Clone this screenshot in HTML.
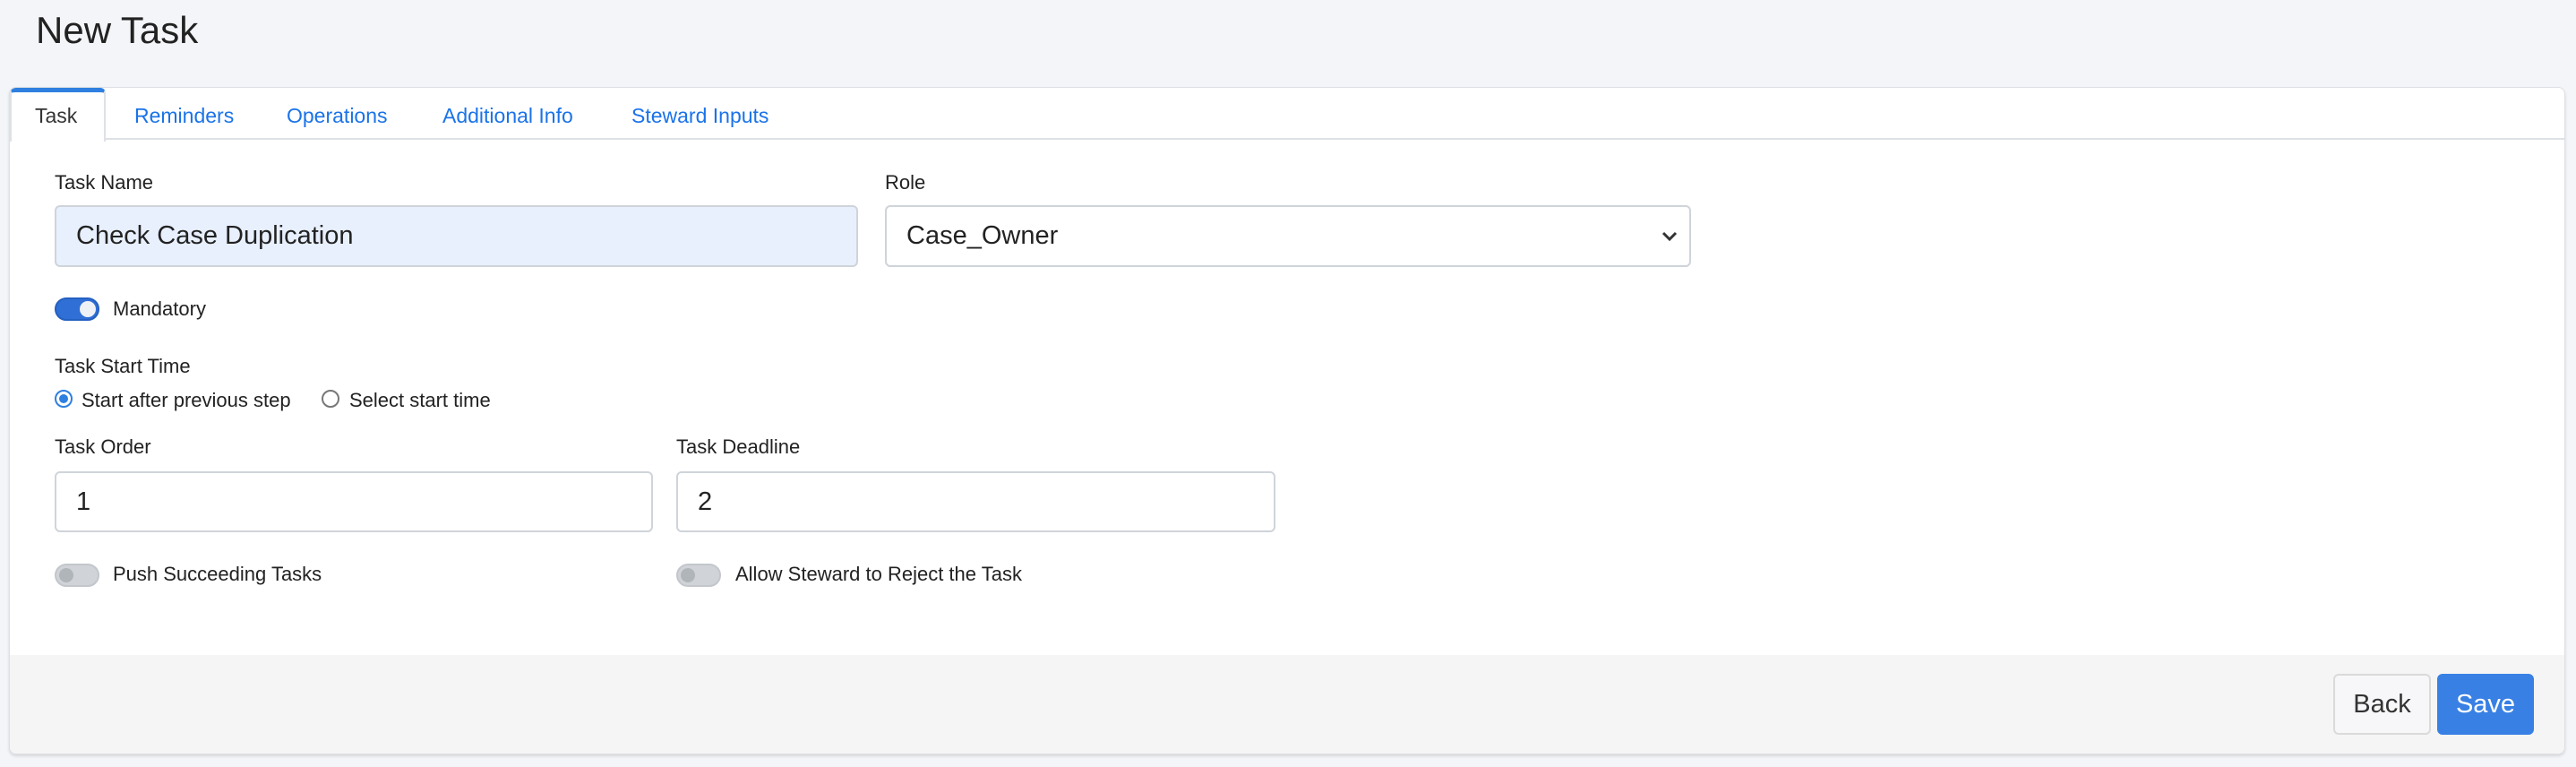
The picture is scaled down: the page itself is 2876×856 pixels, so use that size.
<!DOCTYPE html>
<html><head><meta charset="utf-8"><style>
*{box-sizing:border-box;margin:0;padding:0}
body{width:2876px;height:856px;background:#f4f5f9;font-family:"Liberation Sans",Arial,sans-serif;color:#212529;position:relative;overflow:hidden}
.a{position:absolute}
h1{position:absolute;left:40px;top:10px;font-size:42px;font-weight:400;color:#222}
.card{left:10px;top:97px;width:2854px;height:745px;background:#fff;border:1px solid #dcdfe4;border-radius:8px;box-shadow:0 2px 3px rgba(0,0,0,.12);overflow:hidden}
.tabline{left:0;top:56px;width:100%;height:2px;background:#dee2e6}
.tab{position:absolute;top:18px;font-size:23px;color:#1a73e8}
.act{left:0;top:0;width:107px;height:60px;background:#fff;border:2px solid #dee2e6;border-bottom:none;border-top:5px solid #2f7fe0;border-radius:6px 6px 0 0}
.lbl{position:absolute;font-size:22px;color:#222}
.inp{position:absolute;border:2px solid #cfd4da;border-radius:6px;background:#fff;font-size:29px;padding-left:22px;display:flex;align-items:center;color:#222}
.foot{left:0;top:633px;width:100%;height:112px;background:#f5f5f5}
.tg{position:absolute;width:50px;height:26px;border-radius:13px;background:#d0d4d9;border:2px solid #c3c7cc}
.tg i{position:absolute;left:3px;top:3px;width:16px;height:16px;border-radius:50%;background:#b0b5ba}
</style></head><body>
<h1>New Task</h1>
<div class="a card">
 <div class="a tabline"></div>
 <div class="a act"></div>
 <div class="tab" style="left:28px;color:#333">Task</div>
 <div class="tab" style="left:139px">Reminders</div>
 <div class="tab" style="left:309px">Operations</div>
 <div class="tab" style="left:483px">Additional Info</div>
 <div class="tab" style="left:694px">Steward Inputs</div>

 <div class="lbl" style="left:50px;top:93px">Task Name</div>
 <div class="inp" style="left:50px;top:131px;width:897px;height:69px;background:#e8f0fe">Check Case Duplication</div>
 <div class="lbl" style="left:977px;top:93px">Role</div>
 <div class="inp" style="left:977px;top:131px;width:900px;height:69px">Case_Owner
  <svg class="a" style="right:12px;top:25px" width="20" height="16" viewBox="0 0 20 16"><path d="M3 4l7 7 7-7" fill="none" stroke="#333" stroke-width="3"/></svg></div>

 <div class="tg" style="left:50px;top:234px;background:#2f6fd6;border-color:#2560c0"><i style="left:26px;background:#eef1f5;top:2px;width:18px;height:18px"></i></div>
 <div class="lbl" style="left:115px;top:234px">Mandatory</div>

 <div class="lbl" style="left:50px;top:298px">Task Start Time</div>
 <div class="a" style="left:50px;top:337px;width:20px;height:20px;border-radius:50%;border:2px solid #2f7fe0;background:#fff"><div class="a" style="left:3px;top:3px;width:10px;height:10px;border-radius:50%;background:#2f7fe0"></div></div>
 <div class="lbl" style="left:80px;top:336px">Start after previous step</div>
 <div class="a" style="left:348px;top:337px;width:20px;height:20px;border-radius:50%;border:2px solid #777;background:#fff"></div>
 <div class="lbl" style="left:379px;top:336px">Select start time</div>

 <div class="lbl" style="left:50px;top:388px">Task Order</div>
 <div class="inp" style="left:50px;top:428px;width:668px;height:68px">1</div>
 <div class="lbl" style="left:744px;top:388px">Task Deadline</div>
 <div class="inp" style="left:744px;top:428px;width:669px;height:68px">2</div>

 <div class="tg" style="left:50px;top:531px"><i></i></div>
 <div class="lbl" style="left:115px;top:530px">Push Succeeding Tasks</div>
 <div class="tg" style="left:744px;top:531px"><i></i></div>
 <div class="lbl" style="left:810px;top:530px">Allow Steward to Reject the Task</div>

 <div class="a foot"></div>
 <div class="a" style="left:2594px;top:654px;width:109px;height:68px;border:2px solid #dadada;border-radius:6px;background:#f7f7f9;font-size:29px;color:#333;display:flex;align-items:center;justify-content:center">Back</div>
 <div class="a" style="left:2710px;top:654px;width:108px;height:68px;border-radius:6px;background:#3880e4;font-size:29px;color:#fff;display:flex;align-items:center;justify-content:center">Save</div>
</div>
</body></html>
